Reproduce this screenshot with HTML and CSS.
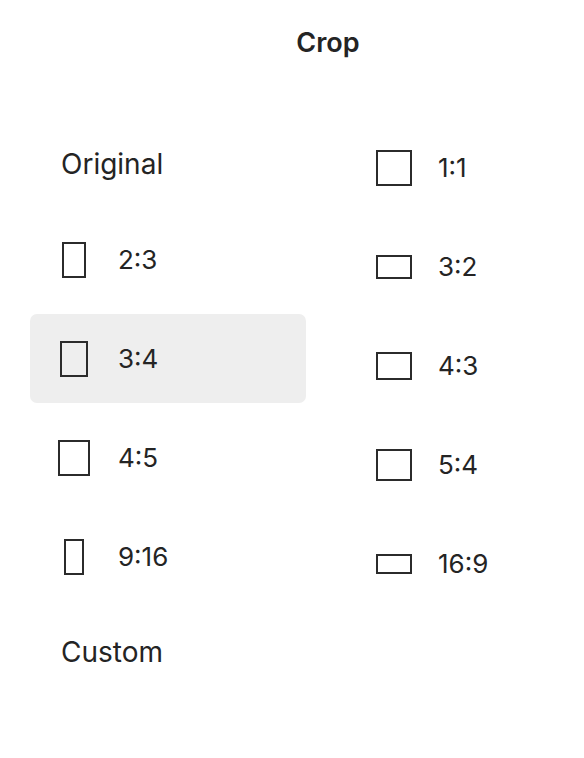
FILE: index.html
```html
<!DOCTYPE html>
<html>
<head>
<meta charset="utf-8">
<link rel="stylesheet" href="styles.css">
</head>
<body>
<div class="panel">
  <h1 class="title">Crop</h1>
  <div class="columns">
    <div class="col col-left">
      <div class="item text-only">Original</div>
      <div class="item"><span class="icon-box"><span class="shape r-2-3"></span></span><span class="label">2:3</span></div>
      <div class="item selected"><span class="icon-box"><span class="shape r-3-4"></span></span><span class="label">3:4</span></div>
      <div class="item"><span class="icon-box"><span class="shape r-4-5"></span></span><span class="label">4:5</span></div>
      <div class="item"><span class="icon-box"><span class="shape r-9-16"></span></span><span class="label">9:16</span></div>
      <div class="item text-only">Custom</div>
    </div>
    <div class="col col-right">
      <div class="item"><span class="icon-box"><span class="shape r-1-1"></span></span><span class="label">1:1</span></div>
      <div class="item"><span class="icon-box"><span class="shape r-3-2"></span></span><span class="label">3:2</span></div>
      <div class="item"><span class="icon-box"><span class="shape r-4-3"></span></span><span class="label">4:3</span></div>
      <div class="item"><span class="icon-box"><span class="shape r-5-4"></span></span><span class="label">5:4</span></div>
      <div class="item"><span class="icon-box"><span class="shape r-16-9"></span></span><span class="label">16:9</span></div>
    </div>
  </div>
</div>
</body>
</html>
```
FILE: styles.css
```css
html, body {
  margin: 0;
  padding: 0;
  background: #ffffff;
  overflow: hidden;
}
body {
  font-family: Inter, "Liberation Sans", sans-serif;
  color: #242424;
}
.panel {
  width: 584px;
  box-sizing: border-box;
  padding: 0 30px;
}
.title {
  margin: 0;
  height: 86px;
  line-height: 86px;
  padding-left: 72px;
  text-align: center;
  font-size: 27px;
  font-weight: 600;
  color: #242424;
}
.columns {
  display: flex;
  gap: 44px;
  margin-top: 37px;
}
.col {
  display: flex;
  flex-direction: column;
  gap: 10px;
}
.col-left {
  width: 276px;
}
.col-right {
  flex: 1;
}
.item {
  height: 89px;
  box-sizing: border-box;
  padding-left: 26px;
  display: flex;
  align-items: center;
  gap: 26px;
  font-size: 26px;
  border-radius: 7px;
}
.item.text-only {
  height: 82px;
  padding-left: 31px;
  font-size: 28px;
}
.item.selected {
  background: #eeeeee;
}
.icon-box {
  width: 36px;
  height: 36px;
  display: flex;
  align-items: center;
  justify-content: center;
  flex: none;
}
.shape {
  box-sizing: border-box;
  border: 2px solid #2b2b2b;
  display: block;
}
.r-2-3 { width: 24px; height: 36px; }
.r-3-4 { width: 28px; height: 36px; }
.r-4-5 { width: 32px; height: 36px; }
.r-9-16 { width: 20px; height: 36px; }
.r-1-1 { width: 36px; height: 36px; }
.r-3-2 { width: 36px; height: 24px; }
.r-4-3 { width: 36px; height: 28px; }
.r-5-4 { width: 36px; height: 32px; }
.r-16-9 { width: 36px; height: 20px; }
.label {
  line-height: 30px;
}
```
